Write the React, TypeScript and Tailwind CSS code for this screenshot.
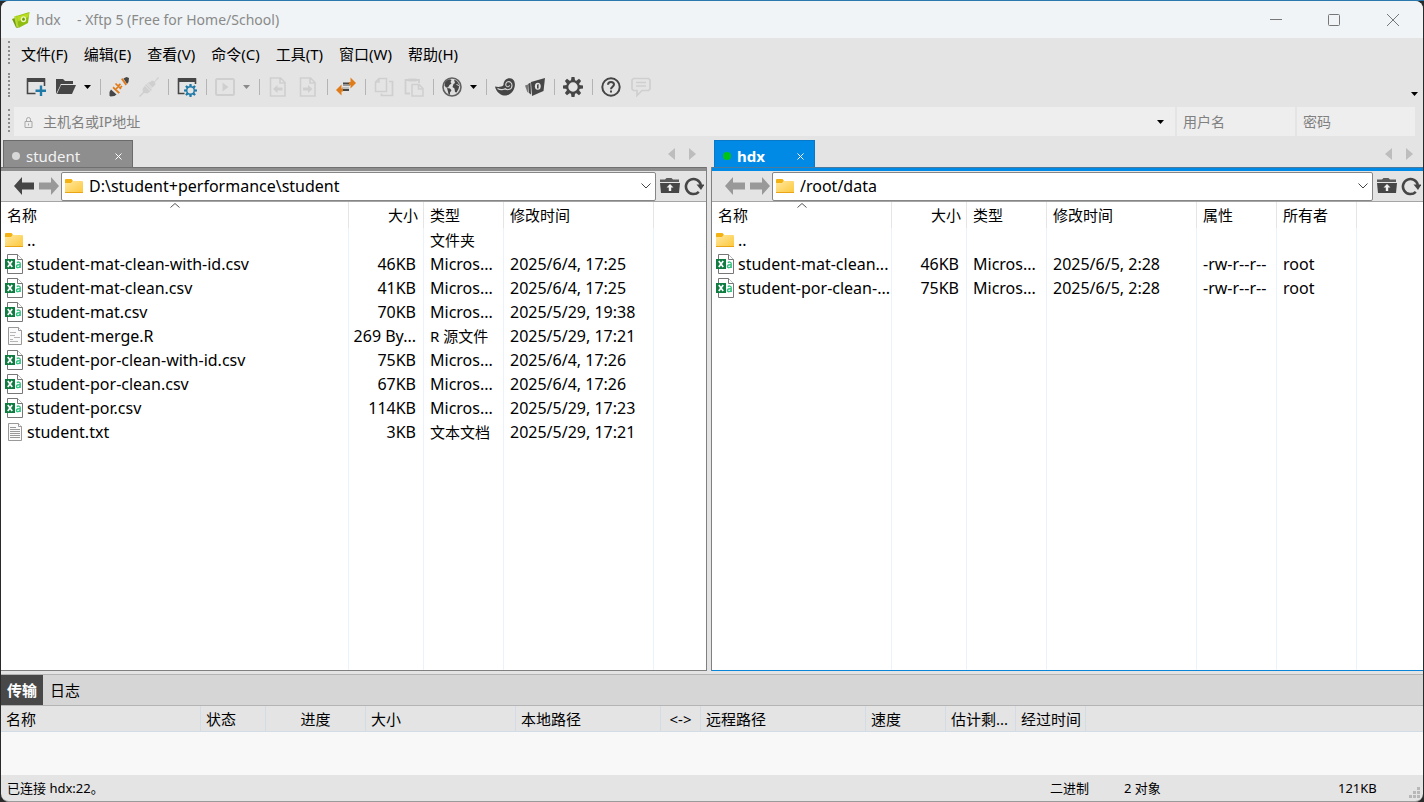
import React from "react";

type IconProps = { children: React.ReactNode; className?: string };

function Icon({ children, className = "size-5" }: IconProps) {
  return (
    <svg viewBox="0 0 20 20" className={className} fill="none" aria-hidden="true">
      {children}
    </svg>
  );
}

const DARK = "#464646";
const BLUE = "#1f7aa8";
const ORANGE = "#e07b1a";
const OFF = "#cfcfcf";

const AppLogo = () => (
  <Icon>
    <path d="M1 9l3-1 3 10-2-.5z" fill="#6f9a12" />
    <path d="M3 6.500l3-1 1.500 12-2-.5z" fill="#b6d838" />
    <path d="M5.500 6L18.500 2 17 13 7.500 18z" fill="#8fbe10" />
    <path d="M6 6.500L18 3l-.5 4-11 4.500z" fill="#b9dc1c" />
    <ellipse cx="12.500" cy="9.200" rx="2.700" ry="3" fill="#eef6c0" />
    <ellipse cx="12.500" cy="9.200" rx="1.300" ry="1.600" fill="#6d9a08" />
  </Icon>
);

const NewIcon = () => (
  <Icon>
    <path d="M9.500 16.500H1.500V2h17v7" stroke={DARK} strokeWidth="1.6" />
    <path d="M1 1h18v4H1z" fill={DARK} />
    <path d="M15 8.500v10.500M9.500 13.800h10.500" stroke={BLUE} strokeWidth="2.400" />
  </Icon>
);

const OpenIcon = () => (
  <Icon>
    <path d="M0 17V2h7l2 2h8v3H5z" fill={DARK} />
    <path d="M5 8h15l-4 9H1z" fill={DARK} />
    <path d="M4.800 7.500h15" stroke="#e4e4e4" strokeWidth="1" />
  </Icon>
);

const PlugIcon = () => (
  <Icon>
    <path d="M14.500 1.500l3-1.500 2.500 1-.5 4-1.500 2z" fill={DARK} />
    <path d="M12 2l1.800-.8 4.200 6-1.500 1.300z" fill={ORANGE} />
    <path d="M6.500 6.500l5.500 5.500M9 9l2.500-2M11 11l2-2" stroke={ORANGE} strokeWidth="1.700" />
    <path d="M4.500 9.500l6.500 6-1.500 1.300-6-5.800z" fill={ORANGE} />
    <path d="M2 12.500l5.500 5-2 1.500-4 .500-1-.8v-3.700z" fill={DARK} />
    <path d="M7 12l2-2" stroke={ORANGE} strokeWidth="1.700" />
  </Icon>
);

const UnplugIcon = () => (
  <Icon>
    <path d="M12 4.500l1-1 2.500 1L19 0l1 1-4 4 .500 2.500-4 4-5-5z" fill={OFF} />
    <path d="M7 7l6 6-4.500 3.500-3.500-.500L1 20l-1-1 4-4-.500-3z" fill={OFF} />
    <path d="M5.500 8l7 7M8.500 6l6 6" stroke="#e4e4e4" strokeWidth="1" />
  </Icon>
);

const GearShape = ({ cx, cy, k, color }: { cx: number; cy: number; k: number; color: string }) => (
  <g transform={`translate(${cx} ${cy}) scale(${k})`}>
    {[0, 45, 90, 135, 180, 225, 270, 315].map((a) => (
      <path key={a} d="M-1.500 -10h3l.6 4h-4.200z" fill={color} transform={`rotate(${a})`} />
    ))}
    <circle r="5.800" stroke={color} strokeWidth="2.200" fill="none" />
  </g>
);

const PropsIcon = () => (
  <Icon>
    <path d="M7.500 16.500H1.500V2h17v5" stroke={DARK} strokeWidth="1.6" />
    <path d="M1 1h18v4H1z" fill={DARK} />
    <GearShape cx={13.5} cy={13.5} k={0.65} color={BLUE} />
  </Icon>
);

const PlayIcon = () => (
  <Icon>
    <rect x="1" y="2" width="18" height="16" rx="1.500" stroke={OFF} strokeWidth="2" />
    <path d="M7.500 5.500l6 4.500-6 4.500z" fill={OFF} />
  </Icon>
);

const DocArrow = ({ flip }: { flip?: boolean }) => (
  <Icon>
    <path d="M2.500 1h10L17 5.500V19H2.500zM12 1v5h5" stroke={OFF} strokeWidth="1.600" />
    <path
      d="M5 12l4.500-4v2.500h5v3h-5V16z"
      fill={OFF}
      transform={flip ? "translate(19.500 0) scale(-1 1)" : undefined}
    />
  </Icon>
);

const SyncIcon = () => (
  <Icon>
    <path d="M7 6.500h7M6 13h7" stroke={DARK} strokeWidth="1.800" />
    <path d="M7 8.500h7M6 11h7" stroke="#999" strokeWidth="1" />
    <path d="M14.500 0.500L20 6l-5.500 5.500z" fill={ORANGE} />
    <path d="M5.500 7.500L0 13l5.500 5.500z" fill={ORANGE} />
    <path d="M13 5h3v3h-3zM4 11.500h3v3H4z" fill={ORANGE} />
  </Icon>
);

const CopyIcon = () => (
  <Icon>
    <path d="M5 1.500h7.500v13H1.500V5zM5 1.500V5H1.500" stroke={OFF} strokeWidth="1.500" />
    <path d="M15 4.500h3.500v14H7.500v-2" stroke={OFF} strokeWidth="1.700" />
  </Icon>
);

const PasteIcon = () => (
  <Icon>
    <path d="M6 16.500H1.500V3H5M12 3h3v3" stroke={OFF} strokeWidth="1.800" />
    <path d="M4.500 1.500h8v3h-8z" fill={OFF} />
    <path d="M8 7.500h7l4 4v7.500H8zM14.500 7.500V12H19" stroke={OFF} strokeWidth="1.500" />
  </Icon>
);

const GlobeIcon = () => (
  <Icon>
    <circle cx="10" cy="10" r="9" fill="#dedede" stroke="#606060" strokeWidth="1.600" />
    <path d="M3 5.500C4.500 3.500 6 2.500 8 2.200L9.500 3 8.500 5l1 1.500-2 1.500-1.500 2.500H4L2.500 8.500z" fill={DARK} />
    <path d="M5 11l3 .5 1.500 1.800L8 15.500v2.200l-1.500-.7-.7-3z" fill={DARK} />
    <path d="M12 2.500l3 1.500 2.500 4-1 4-2 3.500-1.500-.5-.5-3.500-2-1.500 1-3L13 6z" fill={DARK} />
    <path d="M14.500 7.500l2.500 1" stroke="#dedede" strokeWidth="1" />
  </Icon>
);

const ShellIcon = () => (
  <Icon>
    <path
      d="M0 9.500c3 .8 7 .6 8.500-1.500C8.500 3.500 11.500 1 15 1.200c4 .3 5.600 4.300 4.600 8.800C18.500 15.500 14 19 9 18.500 4.500 18 1 14 0 9.500z"
      fill={DARK}
    />
    <path
      d="M2.500 11.500c3 1.800 6.500 1.200 8 0M10 11.500c2.500 2.500 7 .8 7-3 0-2.800-2.200-4.300-4.200-3.700-2 .6-2.600 2.800-1.500 4.200 1.100 1.300 3 .8 3.200-.8"
      stroke="#d6d6d6"
      strokeWidth="1.100"
    />
  </Icon>
);

const XftpIcon = () => (
  <Icon>
    <path d="M0 8.500l3-1 .5 8.500-1.200-1z" fill="#777" />
    <path d="M3.200 7L5.500 5.500 6 17.500l-2-1.500z" fill={DARK} />
    <path d="M6 5L20 1l-1.500 13L7 19z" fill={DARK} />
    <ellipse cx="12.800" cy="9.300" rx="2.900" ry="3.500" fill="#e4e4e4" />
    <path d="M12 7.800l1.600-.8v4.500H12z" fill={DARK} />
  </Icon>
);

const HelpIcon = () => (
  <Icon>
    <circle cx="10" cy="10" r="8.700" stroke={DARK} strokeWidth="2" />
    <path d="M7 7.800C7 6 8.200 5 10 5s3 1 3 2.600c0 2-3 2.300-3 4.600" stroke={DARK} strokeWidth="2" />
    <path d="M9 13.600h2v2H9z" fill={DARK} />
  </Icon>
);

const ChatIcon = () => (
  <Icon>
    <path d="M2.500 1.500h15l1.500 1.500v9l-1.500 1.500H11l-5 5v-5H2.500L1 12V3z" stroke={OFF} strokeWidth="1.700" />
    <path d="M5 5.500h10M5 9h10" stroke={OFF} strokeWidth="1.600" />
  </Icon>
);

const Arrow = ({ color, flip }: { color: string; flip?: boolean }) => (
  <Icon>
    <path
      d="M0 10l8-9v5.500h12v7H8V19z"
      fill={color}
      transform={flip ? "translate(20 0) scale(-1 1)" : undefined}
    />
  </Icon>
);

const UpFolderIcon = () => (
  <Icon>
    <path d="M0 6V3.500h5L6.500 2h5L13 3.500h6V6z" fill="#5b5b5b" />
    <path d="M0 7h20l-1 10H1z" fill={DARK} />
    <path d="M10 8l3.500 3.500h-2.300V15H8.800v-3.500H6.500z" fill="#f2f2f2" />
  </Icon>
);

const RefreshIcon = () => (
  <Icon>
    <path d="M14.800 15.800A7.500 7.500 0 1 1 16.800 9" stroke={DARK} strokeWidth="2.600" />
    <path d="M12.500 8.500H20.500l-3.500 5.500z" fill={DARK} />
  </Icon>
);

const FolderIcon = () => (
  <svg viewBox="0 0 18 16" className="h-4 w-[18px] shrink-0" aria-hidden="true">
    <defs>
      <linearGradient id="folderFace" x1="0" y1="0" x2="1" y2="1">
        <stop offset="0" stopColor="#ffe8a0" />
        <stop offset="1" stopColor="#fdc83a" />
      </linearGradient>
    </defs>
    <path d="M0 2q0-1 1-1h5.500l1.500 2-1.500 2H0z" fill="#f3b112" />
    <path d="M0 5h6l2-2h9q1 0 1 1v10q0 1-1 1H1q-1 0-1-1z" fill="url(#folderFace)" />
    <path d="M0 14.500h18" stroke="#eaa516" strokeWidth="1" />
  </svg>
);

const CsvIcon = () => (
  <svg viewBox="0 0 18 20" className="h-5 w-[18px] shrink-0" aria-hidden="true">
    <path d="M2.500.500h10l5 5v14h-15z" fill="#fff" stroke="#777" />
    <path d="M12.500.500v5h5" fill="#fff" stroke="#777" />
    <path d="M0 5h10v10H0z" fill="#107c41" />
    <path d="M2.800 7l4.400 6M7.200 7l-4.400 6" stroke="#fff" strokeWidth="1.700" />
    <path d="M11.800 8.600c1-.8 3.400-.8 3.400 1V14M15 10.800c-2-.2-3.500.2-3.500 1.600 0 1.800 2.900 1.600 3.600 0" fill="none" stroke="#33c481" strokeWidth="1.400" />
  </svg>
);

const TextFileIcon = ({ dense }: { dense?: boolean }) => (
  <svg viewBox="0 0 18 20" className="h-5 w-[18px] shrink-0" aria-hidden="true">
    <path d="M3.500 1.500h10l3 3v14h-13z" fill="#fafafa" stroke="#999" />
    <path d="M13.500 1.500v3h3" fill="#fff" stroke="#999" />
    {dense ? (
      <path d="M5 5.500h6M5 7.500h10M5 9.500h10M5 11.500h10M5 13.500h10M5 15.500h10" stroke="#999" />
    ) : (
      <path d="M5 6.500h6M5 9.500h5M9 11.500h6M5 13.500h3M5 15.500h8" stroke="#b5b5b5" />
    )}
  </svg>
);

const Grip = () => (
  <span className="w-0 shrink-0 border-l-2 border-dotted border-[#8e8e8e]" aria-hidden="true" />
);

function Tool({ label, children, disabled }: { label: string; children: React.ReactNode; disabled?: boolean }) {
  return (
    <button type="button" aria-label={label} disabled={disabled} className="flex h-6 w-[30px] shrink-0 items-center justify-center">
      {children}
    </button>
  );
}

function DropArrow({ label, muted }: { label: string; muted?: boolean }) {
  return (
    <button type="button" aria-label={label} className="flex h-6 w-[15px] shrink-0 items-center pl-[3px]">
      <svg viewBox="0 0 7 4" className={muted ? "h-1 w-[7px] text-[#8a8a8a]" : "h-1 w-[7px] text-black"} aria-hidden="true">
        <path d="M0 0h7L3.500 4z" fill="currentColor" />
      </svg>
    </button>
  );
}

const Sep = () => (
  <span className="flex w-2 shrink-0 justify-center" aria-hidden="true">
    <span className="h-4 w-px bg-[#b4b4b4]" />
  </span>
);

function Toolbar() {
  return (
    <div className="flex h-[37px] shrink-0 pl-[7px]">
      <div className="flex pt-[3px] pb-[10px]">
        <Grip />
      </div>
      <div className="flex h-[34px] flex-1 items-center pl-[11px]" role="toolbar" aria-label="工具栏">
        <Tool label="新建"><NewIcon /></Tool>
        <Tool label="打开"><OpenIcon /></Tool>
        <DropArrow label="打开选项" />
        <Sep />
        <Tool label="连接"><PlugIcon /></Tool>
        <Tool label="断开" disabled><UnplugIcon /></Tool>
        <Sep />
        <Tool label="属性"><PropsIcon /></Tool>
        <Sep />
        <Tool label="运行" disabled><PlayIcon /></Tool>
        <DropArrow label="运行选项" muted />
        <Sep />
        <Tool label="下载" disabled><DocArrow /></Tool>
        <Tool label="上传" disabled><DocArrow flip /></Tool>
        <Sep />
        <Tool label="同步"><SyncIcon /></Tool>
        <Sep />
        <Tool label="复制" disabled><CopyIcon /></Tool>
        <Tool label="粘贴" disabled><PasteIcon /></Tool>
        <Sep />
        <Tool label="编码"><GlobeIcon /></Tool>
        <DropArrow label="编码选项" />
        <Sep />
        <Tool label="Xshell"><ShellIcon /></Tool>
        <Tool label="Xftp"><XftpIcon /></Tool>
        <Sep />
        <Tool label="选项">
          <Icon><GearShape cx={10} cy={10} k={1} color={DARK} /></Icon>
        </Tool>
        <Sep />
        <Tool label="帮助"><HelpIcon /></Tool>
        <Tool label="反馈" disabled><ChatIcon /></Tool>
      </div>
      <div className="flex items-end pb-px">
        <DropArrow label="更多按钮" />
      </div>
    </div>
  );
}

function TabScroll() {
  return (
    <div className="ml-auto flex items-center gap-2">
      <button type="button" aria-label="向左滚动" className="flex size-[13px] items-center justify-center">
        <svg viewBox="0 0 7 12" className="h-3 w-[7px]" aria-hidden="true"><path d="M7 0v12L0 6z" fill="#bdbdbd" /></svg>
      </button>
      <button type="button" aria-label="向右滚动" className="flex size-[13px] items-center justify-center">
        <svg viewBox="0 0 7 12" className="h-3 w-[7px]" aria-hidden="true"><path d="M0 0v12l7-6z" fill="#bdbdbd" /></svg>
      </button>
    </div>
  );
}

const CloseMark = () => (
  <svg viewBox="0 0 7 7" className="size-[7px]" aria-hidden="true">
    <path d="M.500.500l6 6M6.500.500l-6 6" stroke="#fff" strokeWidth="1" />
  </svg>
);

type FileRow = { kind: "up" | "csv" | "r" | "txt"; cells: string[] };

const CELL_ALIGN = ["pl-1", "pr-[7px] text-right", "pl-1.5", "pl-1.5", "pl-1.5", "pl-1.5"];
const HEAD_ALIGN = ["pl-1.5 text-left", "pr-[5px] text-right", "pl-1.5 text-left", "pl-1.5 text-left", "pl-1.5 text-left", "pl-1.5 text-left"];

const hasHan = (text: string) => /[\u4e00-\u9fff]/.test(text);

function FileTable({ heads, widths, rows }: { heads: string[]; widths: string[]; rows: FileRow[] }) {
  return (
    <div className="min-h-0 flex-1 bg-white">
      <table className="h-full w-full table-fixed border-separate border-spacing-0 text-[15px] leading-5 whitespace-nowrap">
        <colgroup>
          {widths.map((w, i) => <col key={i} className={w} />)}
          <col />
        </colgroup>
        <thead>
          <tr className="h-[26px]">
            {heads.map((h, i) => (
              <th key={h} scope="col" className={`relative border-r border-[#e5e5e5] p-0 font-normal ${HEAD_ALIGN[i]}`}>
                {h}
                {i === 0 && (
                  <svg viewBox="0 0 10 5" className="absolute top-px left-1/2 h-[5px] w-2.5 -translate-x-1/2" fill="none" aria-hidden="true">
                    <path d="M.500 4.500L5 .500l4.500 4" stroke="#555" />
                  </svg>
                )}
              </th>
            ))}
            <td />
          </tr>
        </thead>
        <tbody>
          {rows.map((row, r) => (
            <tr key={r} className="h-6">
              {heads.map((h, i) => (
                <td
                  key={h}
                  className={`overflow-hidden border-r border-[#eaf2fb] p-0 ${CELL_ALIGN[i]} ${hasHan(row.cells[i]) ? "text-[15px]" : "text-[16px]"} leading-5`}
                >
                  {i === 0 ? (
                    <span className="flex items-center gap-1">
                      {row.kind === "up" && <FolderIcon />}
                      {row.kind === "csv" && <CsvIcon />}
                      {row.kind === "r" && <TextFileIcon />}
                      {row.kind === "txt" && <TextFileIcon dense />}
                      {row.cells[0]}
                    </span>
                  ) : (
                    row.cells[i]
                  )}
                </td>
              ))}
              <td />
            </tr>
          ))}
          <tr>
            {heads.map((h) => <td key={h} className="border-r border-[#eaf2fb] p-0" />)}
            <td />
          </tr>
        </tbody>
      </table>
    </div>
  );
}

function PathBar({ path, backColor }: { path: string; backColor: string }) {
  return (
    <div className="flex h-[31px] shrink-0 items-center border-b border-[#a5a5a5] pr-0.5 pl-[13px]">
      <button type="button" aria-label="后退" className="mr-[5px]"><Arrow color={backColor} /></button>
      <button type="button" aria-label="前进"><Arrow color="#999" flip /></button>
      <div className="relative ml-0.5 flex h-[29px] flex-1 items-center rounded-xs border border-[#868686] bg-white pl-[3px]">
        <FolderIcon />
        <select aria-label="路径" className="h-full flex-1 appearance-none bg-transparent pl-1.5 text-[16px] outline-none">
          <option>{path}</option>
        </select>
        <svg viewBox="0 0 10 6" className="pointer-events-none absolute right-1 h-1.5 w-2.5" fill="none" aria-hidden="true">
          <path d="M.500.500L5 5l4.500-4.500" stroke="#444" />
        </svg>
      </div>
      <button type="button" aria-label="上级目录" className="mr-1 ml-1"><UpFolderIcon /></button>
      <button type="button" aria-label="刷新"><RefreshIcon /></button>
    </div>
  );
}

const MENUS = ["文件(F)", "编辑(E)", "查看(V)", "命令(C)", "工具(T)", "窗口(W)", "帮助(H)"];

const LOCAL_ROWS: FileRow[] = [
  { kind: "up", cells: ["..", "", "文件夹", ""] },
  { kind: "csv", cells: ["student-mat-clean-with-id.csv", "46KB", "Micros...", "2025/6/4, 17:25"] },
  { kind: "csv", cells: ["student-mat-clean.csv", "41KB", "Micros...", "2025/6/4, 17:25"] },
  { kind: "csv", cells: ["student-mat.csv", "70KB", "Micros...", "2025/5/29, 19:38"] },
  { kind: "r", cells: ["student-merge.R", "269 By...", "R 源文件", "2025/5/29, 17:21"] },
  { kind: "csv", cells: ["student-por-clean-with-id.csv", "75KB", "Micros...", "2025/6/4, 17:26"] },
  { kind: "csv", cells: ["student-por-clean.csv", "67KB", "Micros...", "2025/6/4, 17:26"] },
  { kind: "csv", cells: ["student-por.csv", "114KB", "Micros...", "2025/5/29, 17:23"] },
  { kind: "txt", cells: ["student.txt", "3KB", "文本文档", "2025/5/29, 17:21"] },
];

const REMOTE_ROWS: FileRow[] = [
  { kind: "up", cells: ["..", "", "", "", "", ""] },
  { kind: "csv", cells: ["student-mat-clean...", "46KB", "Micros...", "2025/6/5, 2:28", "-rw-r--r--", "root"] },
  { kind: "csv", cells: ["student-por-clean-...", "75KB", "Micros...", "2025/6/5, 2:28", "-rw-r--r--", "root"] },
];

const TRANSFER_COLS = [
  { name: "名称", width: "w-[200px]", align: "pl-[5px] text-left" },
  { name: "状态", width: "w-[65px]", align: "pl-[5px] text-left" },
  { name: "进度", width: "w-[100px]", align: "text-center" },
  { name: "大小", width: "w-[150px]", align: "pl-[5px] text-left" },
  { name: "本地路径", width: "w-[145px]", align: "pl-[5px] text-left" },
  { name: "<->", width: "w-[40px]", align: "text-center" },
  { name: "远程路径", width: "w-[165px]", align: "pl-[5px] text-left" },
  { name: "速度", width: "w-[80px]", align: "pl-[5px] text-left" },
  { name: "估计剩...", width: "w-[70px]", align: "pl-[5px] text-left" },
  { name: "经过时间", width: "w-[70px]", align: "pl-[5px] text-left" },
];

export default function App() {
  return (
    <div className="flex h-screen flex-col border-t border-[#2b78ad] bg-[#2a2a2a] px-px font-['Noto_Sans','Noto_Sans_CJK_SC',sans-serif] text-black">
      <div className="flex min-h-0 flex-1 flex-col overflow-hidden rounded-lg border-b border-[#9a9a9a] bg-[#e4e4e4]">
        <header className="flex h-[37px] shrink-0 items-center bg-[#f0f4f6] pl-2.5 text-sm text-[#8a8a8a]">
          <AppLogo />
          <h1 className="flex">
            <span className="ml-[5px] w-[41px]">hdx</span>
            <span>- Xftp 5 (Free for Home/School)</span>
          </h1>
          <div className="ml-auto flex items-center">
            <button type="button" aria-label="最小化" className="flex w-[58px] justify-center">
              <svg viewBox="0 0 12 12" className="size-3" aria-hidden="true"><path d="M0 5.500h12" stroke="#777" /></svg>
            </button>
            <button type="button" aria-label="最大化" className="flex w-[58px] justify-center">
              <svg viewBox="0 0 12 12" className="size-3" fill="none" aria-hidden="true"><rect x=".5" y=".5" width="11" height="11" rx="1" stroke="#777" /></svg>
            </button>
            <button type="button" aria-label="关闭" className="flex w-[60px] justify-center">
              <svg viewBox="0 0 12 12" className="size-3" aria-hidden="true"><path d="M0 0l12 12M12 0L0 12" stroke="#777" /></svg>
            </button>
          </div>
        </header>

        <nav className="flex h-8 shrink-0 items-stretch pl-[7px] text-[15px]">
          <div className="flex pt-[3px] pb-1.5"><Grip /></div>
          <div className="flex items-center gap-4 pl-[11px]">
            {MENUS.map((m) => <button key={m} type="button">{m}</button>)}
          </div>
        </nav>

        <Toolbar />

        <form className="flex h-[33px] shrink-0 items-start pr-2 pl-[7px] text-sm text-[#808080]">
          <div className="flex h-[25px] pt-0.5"><Grip /></div>
          <div className="ml-1 flex h-[29px] flex-1 items-center bg-[#eeeeee] pl-2.5">
            <svg viewBox="0 0 9 11" className="mt-px h-[11px] w-[9px]" fill="none" stroke="#a8a8a8" aria-hidden="true">
              <path d="M1 4.500h7v6H1zM2.500 4.500v-2q0-2 2-2t2 2v2M4.500 6.500v2" />
            </svg>
            <input aria-label="主机" placeholder="主机名或IP地址" className="h-full min-w-0 flex-1 bg-transparent pl-2.5 outline-none placeholder:text-[#808080]" />
            <DropArrow label="历史主机" />
            <span className="w-1.5" />
          </div>
          <input aria-label="用户名" placeholder="用户名" className="ml-0.5 h-[29px] w-[118px] bg-[#eeeeee] px-1.5 outline-none placeholder:text-[#808080]" />
          <input aria-label="密码" type="password" placeholder="密码" className="ml-0.5 h-[29px] w-[118px] bg-[#eeeeee] px-1.5 outline-none placeholder:text-[#808080]" />
        </form>

        <main className="flex min-h-0 flex-1">
          <section className="flex w-[706px] shrink-0 flex-col" aria-label="本地">
            <div className="flex h-[27px] shrink-0 pr-2 pl-0.5" role="tablist">
              <div className="flex w-[130px] items-center border border-b-0 border-[#6b6b6b] bg-[#8e8e8e] px-2 pt-1 text-[15px] text-[#f2f2f2]">
                <span className="size-2 rounded-full bg-[#d8d8d8]" />
                <button type="button" role="tab" aria-selected="true" className="ml-1.5">student</button>
                <button type="button" aria-label="关闭 student" className="mr-0.5 ml-auto"><CloseMark /></button>
              </div>
              <TabScroll />
            </div>
            <div className="flex min-h-0 flex-1 flex-col border-r border-b border-[#808080]">
              <div className="h-1 shrink-0 border-t border-[#707070] bg-[#8e8e8e]" />
              <PathBar path="D:\student+performance\student" backColor={DARK} />
              <FileTable
                heads={["名称", "大小", "类型", "修改时间"]}
                widths={["w-[348px]", "w-[75px]", "w-[80px]", "w-[150px]"]}
                rows={LOCAL_ROWS}
              />
            </div>
          </section>

          <section className="ml-1 flex min-w-0 flex-1 flex-col" aria-label="远程">
            <div className="flex h-[27px] shrink-0 pr-[7px] pl-[3px]" role="tablist">
              <div className="flex w-[101px] items-center border border-b-0 border-[#0878c8] bg-[#008ae6] px-2 pt-1 text-[15px] text-white">
                <span className="size-2 rounded-full bg-[#00c31a]" />
                <button type="button" role="tab" aria-selected="true" className="ml-1.5 font-bold">hdx</button>
                <button type="button" aria-label="关闭 hdx" className="mr-0.5 ml-auto"><CloseMark /></button>
              </div>
              <TabScroll />
            </div>
            <div className="flex min-h-0 flex-1 flex-col border-b border-l border-b-[#0a84d6] border-l-[#808080]">
              <div className="h-1 shrink-0 border-t border-[#4b7a9c] bg-[#008ae6]" />
              <PathBar path="/root/data" backColor="#999" />
              <FileTable
                heads={["名称", "大小", "类型", "修改时间", "属性", "所有者"]}
                widths={["w-[180px]", "w-[75px]", "w-[80px]", "w-[150px]", "w-[80px]", "w-[80px]"]}
                rows={REMOTE_ROWS}
              />
            </div>
          </section>
        </main>

        <section className="mt-[3px] shrink-0 border-t border-[#b4b4b4] text-[15px]" aria-label="传输">
          <div className="flex h-[31px] items-stretch border-b border-[#b4b4b4] bg-[#d6d6d6]" role="tablist">
            <button type="button" role="tab" aria-selected="true" className="w-[42px] bg-[#484848] font-bold text-white">传输</button>
            <button type="button" role="tab" aria-selected="false" className="w-11">日志</button>
          </div>
          <table className="w-full table-fixed border-separate border-spacing-0 bg-[#f8f8f8] leading-5 whitespace-nowrap">
            <thead>
              <tr className="h-[26px] bg-[#e4e4e4]">
                {TRANSFER_COLS.map((c) => (
                  <th key={c.name} scope="col" className={`border-r border-b border-[#d3dbe6] p-0 font-normal ${c.width} ${c.align}`}>
                    {c.name}
                  </th>
                ))}
                <td className="border-b border-[#d3dbe6]" />
              </tr>
            </thead>
            <tbody>
              <tr className="h-[43px]"><td colSpan={11} /></tr>
            </tbody>
          </table>
        </section>

        <footer className="flex h-[26px] shrink-0 items-center pt-0.5 pl-1.5 text-[13px]">
          <span>已连接 hdx:22。</span>
          <span className="ml-auto w-[74px]">二进制</span>
          <span className="w-[214px]">2 对象</span>
          <span className="w-[71px]">121KB</span>
          <svg viewBox="0 0 12 12" className="mt-2 mr-0.5 size-3" fill="#b8b8b8" aria-hidden="true">
            <path d="M8 0h3v3H8zM4 4h3v3H4zM8 4h3v3H8zM0 8h3v3H0zM4 8h3v3H4zM8 8h3v3H8z" />
          </svg>
        </footer>
      </div>
    </div>
  );
}
